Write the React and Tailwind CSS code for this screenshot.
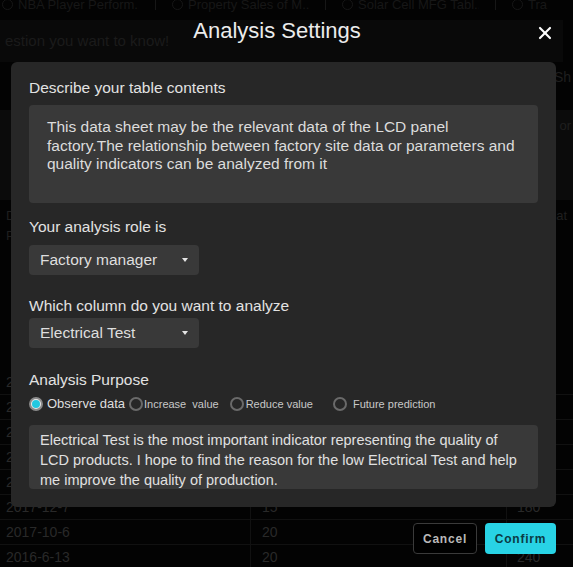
import React, { useState } from 'react'
import { X } from 'lucide-react'

const tabs = ['NBA Player Perform...', 'Property Sales of M...', 'Solar Cell MFG Tabl...', 'Tra']

// the first five rows sit under the dialog, only their first column peeks out
const rows = [
  ['2017-3-1', '', ''],
  ['2017-4-2', '', ''],
  ['2017-5-8', '', ''],
  ['2017-8-3', '', ''],
  ['2017-9-9', '', ''],
  ['2017-12-7', '15', '180'],
  ['2017-10-6', '20', ''],
  ['2016-6-13', '20', '240']
]

const purposes = [
  { label: 'Observe data', cls: 'text-[13px] text-[#dedede] ml-[4px]' },
  { label: 'Increase\u00a0\u00a0value', cls: 'text-[11px] text-[#c8c8c8] ml-[1px]' },
  { label: 'Reduce value', cls: 'text-[11px] text-[#c8c8c8] ml-[2px]' },
  { label: 'Future prediction', cls: 'text-[11px] text-[#c8c8c8] ml-[6px]' }
]

const Caret = () => (
  <svg width="6" height="4" viewBox="0 0 6 4" className="ml-auto">
    <path d="M0 0 L6 0 L3 4 Z" fill="#e5e5e5" />
  </svg>
)

const Select = ({ value }) => (
  <div className="flex items-center w-[170px] h-[30px] rounded-[4px] bg-[#393939] pl-[11px] pr-[11px] text-[15.5px] text-[#dedede]">
    <span>{value}</span>
    <Caret />
  </div>
)

const App = () => {
  const [purpose, setPurpose] = useState(0)

  return (
    <div className="relative w-[573px] h-[567px] overflow-hidden bg-[#030303] font-['Liberation_Sans',Arial,sans-serif]">
      {/* page behind the dialog */}
      <div className="h-[13px] overflow-hidden">
        <div className="flex items-center -mt-[5px] text-[13px] text-[#171717]">
          {tabs.map((t, i) => (
            <div key={t} className="flex items-center">
              <div className="flex items-center gap-[5px] px-[2px]">
                <span className="w-[11px] h-[11px] rounded-full border border-[#171717]"></span>
                <span className="w-[121px] whitespace-nowrap overflow-hidden">{t}</span>
              </div>
              {i < 3 && <span className="mx-[14px] w-px h-[10px] bg-[#171717]"></span>}
            </div>
          ))}
        </div>
      </div>
      <div className="mt-[7px] h-[42px] w-[563px] bg-[#090909] flex items-center pl-[5px] text-[15px] text-[#1b1b1b]">
        estion you want to know!
      </div>
      <div className="flex justify-end pr-[2px] mt-[5px] text-[14px] text-[#1f1f1f]">Sh</div>
      <div className="mt-[22px] h-[90px] bg-[#0b0b0b] flex justify-end pr-[2px] pt-[6px] text-[13px] text-[#1f1f1f]">or</div>
      <div className="flex justify-between px-[6px] pt-[6px] text-[13px] text-[#1f1f1f]">
        <span>D</span>
        <span>at</span>
      </div>
      <div className="px-[6px] text-[13px] text-[#1f1f1f]">P</div>
      <div className="mt-[125px]">
        {rows.map(r => (
          <div key={r[0]} className="grid grid-cols-[251px_256px_1fr] h-[25px] border-b border-[#111] text-[14px] text-[#292929]">
            <div className="flex items-center pl-[6px] border-r border-[#111]">{r[0]}</div>
            <div className="flex items-center pl-[11px] border-r border-[#111]">{r[1]}</div>
            <div className="flex items-center pl-[10px]">{r[2]}</div>
          </div>
        ))}
      </div>

      {/* dialog */}
      <div className="absolute inset-0 flex flex-col">
        <div className="relative h-[62px] flex items-center justify-center pr-[19px]">
          <h1 className="text-[22px] text-[#ececec] -mt-[1px]">Analysis Settings</h1>
          <button className="absolute right-[18px] top-[23px] text-white">
            <X size={20} strokeWidth={2.6} />
          </button>
        </div>

        <div className="ml-[11px] w-[545px] h-[445px] rounded-[6px] bg-[#272727] px-[18px] pt-[17px]">
          <div className="text-[15.5px] leading-[18px] text-[#e2e2e2]">Describe your table contents</div>
          <div className="mt-[8px] h-[98px] rounded-[4px] bg-[#393939] pl-[18px] pr-[16px] pt-[13px] text-[15.5px] leading-[18.5px] text-[#dcdcdc]">
            This data sheet may be the relevant data of the LCD panel factory.The relationship between factory site data or parameters and quality indicators can be analyzed from it
          </div>

          <div className="mt-[15px] text-[15.5px] leading-[18px] text-[#e2e2e2]">Your analysis role is</div>
          <div className="mt-[9px]">
            <Select value="Factory manager" />
          </div>

          <div className="mt-[22px] text-[15.5px] leading-[18px] text-[#e2e2e2]">Which column do you want to analyze</div>
          <div className="mt-[3px]">
            <Select value="Electrical Test" />
          </div>

          <div className="mt-[23px] text-[15.5px] leading-[18px] text-[#e2e2e2]">Analysis Purpose</div>
          <div className="mt-[7px] flex items-center h-[16px]">
            {purposes.map((p, i) => (
              <label key={p.label} onClick={() => setPurpose(i)} className={`flex items-center cursor-pointer ${i === 1 ? 'ml-[4px]' : i === 2 ? 'ml-[11px]' : i === 3 ? 'ml-[20px]' : ''}`}>
                {purpose === i ? (
                  <span className="flex items-center justify-center w-[14px] h-[14px] rounded-full border-2 border-[#8a8a8a] bg-[#e8e8e8]">
                    <span className="w-[8px] h-[8px] rounded-full bg-[#22c8e0]"></span>
                  </span>
                ) : (
                  <span className="w-[14px] h-[14px] rounded-full border-2 border-[#6a6a6a]"></span>
                )}
                <span className={p.cls}>{p.label}</span>
              </label>
            ))}
          </div>

          <div className="mt-[13px] h-[64px] overflow-hidden rounded-[4px] bg-[#393939] pl-[11px] pr-[11px] pt-[5px] text-[14.5px] leading-[20px] text-[#e0e0e0]">
            Electrical Test is the most important indicator representing the quality of LCD products. I hope to find the reason for the low Electrical Test and help me improve the quality of production.
          </div>
        </div>

        <div className="flex justify-end gap-[8px] mt-[16px] pr-[17px]">
          <button className="w-[64px] h-[31px] rounded-[4px] border border-[#3a3a3a] bg-black text-[12px] font-bold tracking-[0.8px] text-[#b9b9b9]">
            Cancel
          </button>
          <button className="w-[71px] h-[31px] rounded-[4px] bg-[#28d3e5] text-[12px] font-bold tracking-[0.8px] text-[#0b3a43]">
            Confirm
          </button>
        </div>
      </div>
    </div>
  )
}

export default App
